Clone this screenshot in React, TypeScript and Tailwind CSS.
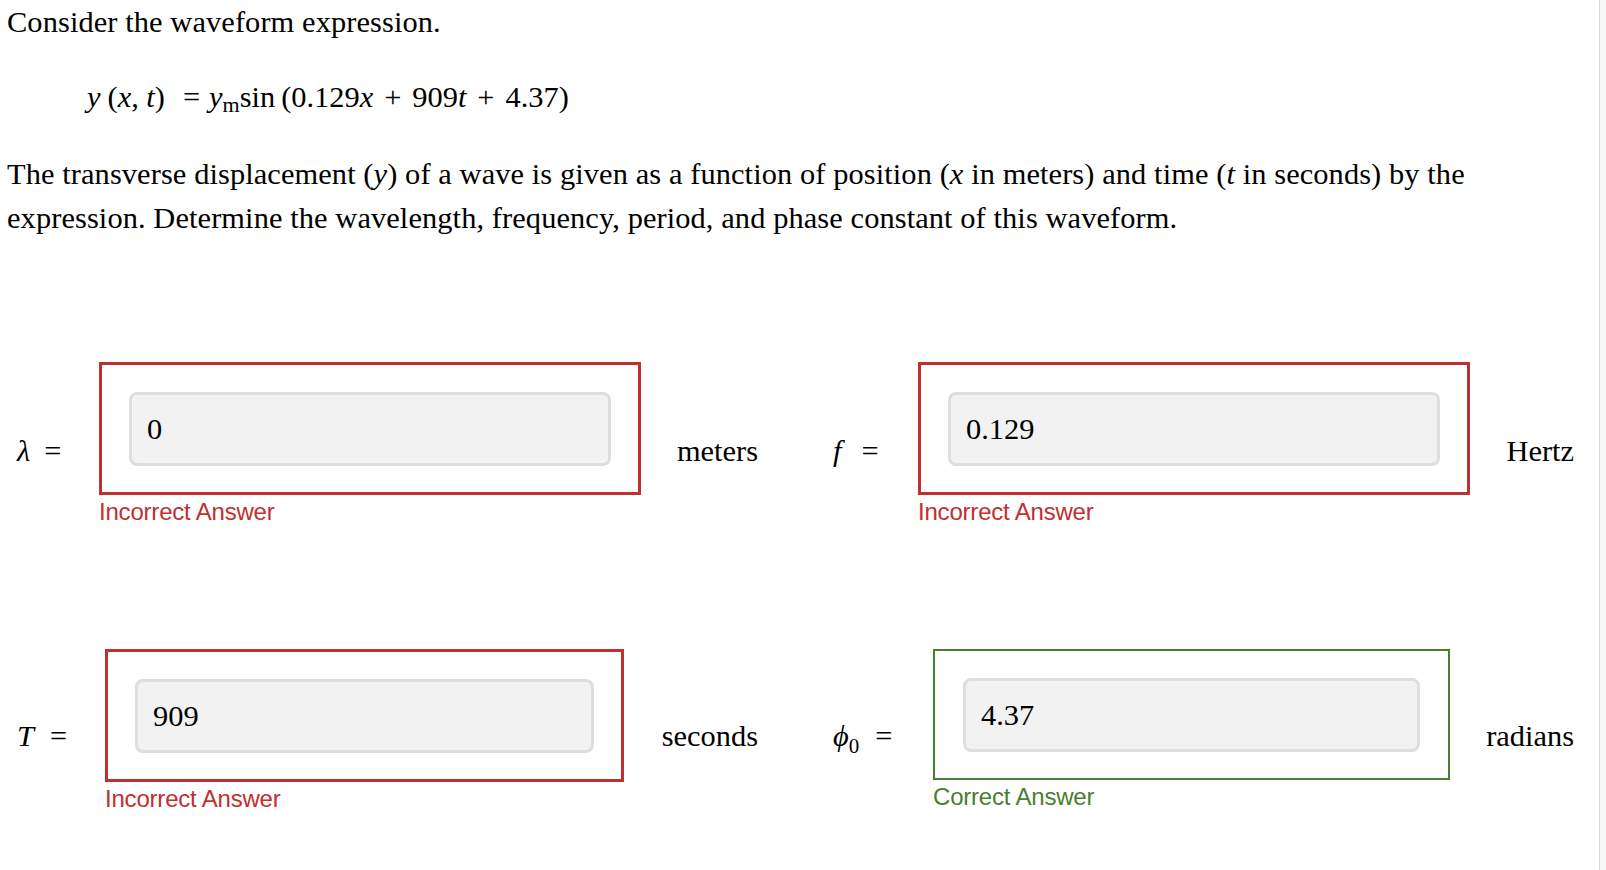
import React from "react";

type Status = "incorrect" | "correct";

function AnswerBox({
  value,
  status,
  width,
}: {
  value: string;
  status: Status;
  width: string;
}) {
  const correct = status === "correct";
  return (
    <div className={`flex flex-col ${width}`}>
      <div
        className={
          correct
            ? "border-2 border-[#4b7d32] px-[28px] pt-[27px] pb-[26px]"
            : "border-[3px] border-[#c22f2f] px-[27px] pt-[27px] pb-[26px]"
        }
      >
        <div className="flex h-[74px] items-center rounded-[8px] border-[3px] border-[#dedede] bg-[#f2f2f2] pl-[15px] text-[30.4px]">
          {value}
        </div>
      </div>
      <div
        className={
          correct
            ? "mt-[3px] font-['Liberation_Sans',sans-serif] text-[24px] leading-[28px] tracking-[-0.2px] text-[#4b7d32]"
            : "mt-[3px] font-['Liberation_Sans',sans-serif] text-[24px] leading-[28px] tracking-[-0.2px] text-[#c22f2f]"
        }
      >
        {correct ? "Correct Answer" : "Incorrect Answer"}
      </div>
    </div>
  );
}

export default function App() {
  return (
    <div className="flex min-h-[870px] w-full bg-white font-['Liberation_Serif',serif] text-black">
      <div className="flex-1 pl-[7px]">
        <p className="text-[30.4px] leading-[44px] tracking-[0.1px]">Consider the waveform expression.</p>

        <div className="mt-[31px] whitespace-nowrap pl-[80px] text-[30.4px] leading-[44px]">
          <i>y</i>
          <span className="ml-[7px]">(</span>
          <i>x</i>, <i>t</i>)<span className="ml-[18px] mr-[9px]">=</span>
          <i>y</i>
          <span className="relative top-[5px] text-[22px]">m</span>
          <span>sin</span>
          <span className="ml-[6px]">(</span>0.129<i>x</i>
          <span className="mx-[11px]">+</span>909<i>t</i>
          <span className="mx-[11px]">+</span>4.37)
        </div>

        <p className="mt-[30px] text-[30.4px] leading-[44px] tracking-[0.1px]">
          The transverse displacement (<i>y</i>) of a wave is given as a function of position (<i>x</i> in meters) and time (
          <i>t</i> in seconds) by the
          <br />
          expression. Determine the wavelength, frequency, period, and phase constant of this waveform.
        </p>

        <div className="mt-[122px] flex pl-[10px] text-[30.4px] leading-[44px]">
          <div className="flex w-[741px] items-start">
            <div className="mt-[67px] w-[82px]">
              <i>λ</i>
              <span className="ml-[14px]">=</span>
            </div>
            <AnswerBox value="0" status="incorrect" width="w-[542px]" />
            <div className="mt-[67px] flex-1 text-right">meters</div>
          </div>
          <div className="ml-[75px] flex w-[741px] items-start">
            <div className="mt-[67px] w-[85px]">
              <i>f</i>
              <span className="ml-[20px]">=</span>
            </div>
            <AnswerBox value="0.129" status="incorrect" width="w-[552px]" />
            <div className="mt-[67px] flex-1 text-right">Hertz</div>
          </div>
        </div>

        <div className="mt-[123px] flex pl-[10px] text-[30.4px] leading-[44px]">
          <div className="flex w-[741px] items-start">
            <div className="mt-[65px] w-[88px]">
              <i>T</i>
              <span className="ml-[16px]">=</span>
            </div>
            <AnswerBox value="909" status="incorrect" width="w-[519px]" />
            <div className="mt-[65px] flex-1 text-right">seconds</div>
          </div>
          <div className="ml-[75px] flex w-[741px] items-start">
            <div className="mt-[65px] w-[100px]">
              <i>ϕ</i>
              <span className="relative top-[7px] text-[21px]">0</span>
              <span className="ml-[16px]">=</span>
            </div>
            <AnswerBox value="4.37" status="correct" width="w-[517px]" />
            <div className="mt-[65px] flex-1 text-right">radians</div>
          </div>
        </div>
      </div>
      <div className="w-px bg-[#dcdcdc]" />
      <div className="w-[6px] bg-[#f7f7f7]" />
    </div>
  );
}
